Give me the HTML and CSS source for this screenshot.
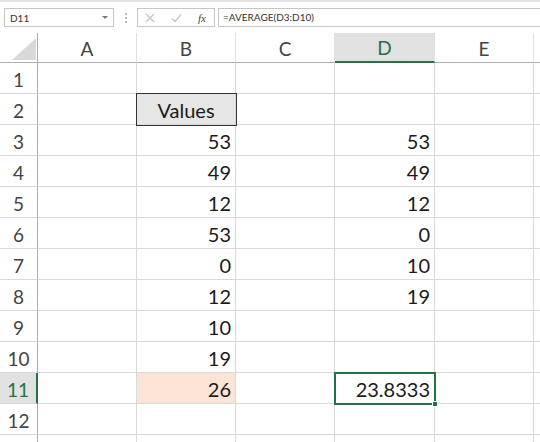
FILE: index.html
```html
<!doctype html>
<html lang="en">
<head>
	<meta charset="UTF-8">
	<title>Sheet</title>
	<link rel="stylesheet" href="styles.css">
</head>
<body>
	<div class="bar">
		<div class="namebox"><span>D11</span><i class="arrow"></i></div>
		<div class="dots"><b></b><b></b><b></b></div>
		<div class="fxbox">
			<svg width="10" height="10" viewBox="0 0 10 10"><path d="M1 1L9 9M9 1L1 9" stroke="#c4c4c4" stroke-width="1.2" fill="none"/></svg>
			<svg width="11" height="10" viewBox="0 0 11 10"><path d="M1 5.5L4 8.5L10 1.5" stroke="#c4c4c4" stroke-width="1.2" fill="none"/></svg>
			<span class="fx">fx</span>
		</div>
		<div class="formula">=AVERAGE(D3:D10)</div>
	</div>
	<div class="sheet">
		<div class="row head">
			<div class="rh corner"><svg width="38" height="30" viewBox="0 0 38 30"><polygon points="36,5 36,27 12,27" fill="#d9d9d9"/></svg></div>
			<div class="c">A</div><div class="c">B</div><div class="c">C</div><div class="c d sel">D</div><div class="c">E</div><div class="fill"></div>
		</div>
		<div class="row"><div class="rh">1</div><div class="c"></div><div class="c"></div><div class="c"></div><div class="c d"></div><div class="c"></div><div class="fill"></div></div>
		<div class="row"><div class="rh">2</div><div class="c"></div><div class="c label">Values</div><div class="c"></div><div class="c d"></div><div class="c"></div><div class="fill"></div></div>
		<div class="row"><div class="rh">3</div><div class="c"></div><div class="c">53</div><div class="c"></div><div class="c d">53</div><div class="c"></div><div class="fill"></div></div>
		<div class="row"><div class="rh">4</div><div class="c"></div><div class="c">49</div><div class="c"></div><div class="c d">49</div><div class="c"></div><div class="fill"></div></div>
		<div class="row"><div class="rh">5</div><div class="c"></div><div class="c">12</div><div class="c"></div><div class="c d">12</div><div class="c"></div><div class="fill"></div></div>
		<div class="row"><div class="rh">6</div><div class="c"></div><div class="c">53</div><div class="c"></div><div class="c d">0</div><div class="c"></div><div class="fill"></div></div>
		<div class="row"><div class="rh">7</div><div class="c"></div><div class="c">0</div><div class="c"></div><div class="c d">10</div><div class="c"></div><div class="fill"></div></div>
		<div class="row"><div class="rh">8</div><div class="c"></div><div class="c">12</div><div class="c"></div><div class="c d">19</div><div class="c"></div><div class="fill"></div></div>
		<div class="row"><div class="rh">9</div><div class="c"></div><div class="c">10</div><div class="c"></div><div class="c d"></div><div class="c"></div><div class="fill"></div></div>
		<div class="row"><div class="rh">10</div><div class="c"></div><div class="c">19</div><div class="c"></div><div class="c d"></div><div class="c"></div><div class="fill"></div></div>
		<div class="row"><div class="rh sel">11</div><div class="c"></div><div class="c peach">26</div><div class="c"></div><div class="c d active">23.8333</div><div class="c"></div><div class="fill"></div></div>
		<div class="row"><div class="rh">12</div><div class="c"></div><div class="c"></div><div class="c"></div><div class="c d"></div><div class="c"></div><div class="fill"></div></div>
		<div class="row"><div class="rh"></div><div class="c"></div><div class="c"></div><div class="c"></div><div class="c d"></div><div class="c"></div><div class="fill"></div></div>
	</div>
</body>
</html>
```

FILE: styles.css
```css
body,html{margin: 0;padding: 0;background: #fff;overflow: hidden;}
body{font-family: Lato, "Liberation Sans", sans-serif;color: #1a1a1a;}

/* formula bar */
.bar{height: 33px;box-sizing: border-box;border-top: 2px solid #e3e3e3;display: flex;align-items: flex-start;padding-top: 6px;}
.namebox{margin-left: 4px;width: 110px;height: 19px;box-sizing: border-box;border: 1px solid #c6c6c6;display: flex;align-items: center;justify-content: space-between;padding: 0 5px 0 5px;font-size: 10px;color: #333;}
.arrow{width: 0;height: 0;border-left: 3px solid transparent;border-right: 3px solid transparent;border-top: 3px solid #777;}
.dots{width: 23px;height: 19px;display: flex;flex-direction: column;align-items: center;justify-content: center;gap: 2px;}
.dots b{width: 2px;height: 2px;background: #bbb;display: block;}
.fxbox{width: 78px;height: 19px;box-sizing: border-box;border: 1px solid #c6c6c6;display: flex;align-items: center;justify-content: space-between;padding: 0 8px 0 7px;}
.fx{font-family: "Liberation Serif", serif;font-style: italic;font-size: 11px;color: #444;}
.formula{flex: 1;margin-left: 3px;height: 19px;box-sizing: border-box;border: 1px solid #c6c6c6;border-right: none;font-size: 10px;color: #333;line-height: 17px;padding-left: 4px;}

/* grid */
.row{display: flex;height: 31px;}
.row.head{height: 30px;}
.row > div{box-sizing: border-box;flex: none;border-right: 1px solid #d9d9d9;border-bottom: 1px solid #d9d9d9;font-size: 20px;text-align: right;padding: 2px 4px 0 0;line-height: 29px;}
.c{width: 99px;}
.c.d{width: 100px;}
.row > .fill{flex: 1;border-right: none;}
.rh{width: 38px;text-align: center !important;padding: 2px 0 0 0 !important;color: #444;font-size: 19px !important;border-right-color: #ababab !important;}
.head > div{text-align: center;padding: 0;line-height: 31px;color: #444;font-size: 19px;border-bottom-color: #ababab;border-right-color: #e1e1e1;}
.head .corner{padding: 0 !important;line-height: 0;}
.head .fill{border-bottom-color: #ababab;}
.head .sel{background: #e1e1e1;border-bottom: 2px solid #217346;color: #217346;line-height: 30px;}
.rh.sel{background: #e1e1e1;border-right: 2px solid #217346 !important;color: #217346;}

.label{text-align: center !important;padding-right: 0 !important;background: #e7e6e6;outline: 1px solid #333;position: relative;z-index: 1;}
.peach{background: #fce4d6;}
.active{position: relative;outline: 2px solid #217346;outline-offset: -1px;z-index: 2;}
.active::after{content: "";position: absolute;right: -4px;bottom: -4px;width: 4px;height: 4px;background: #217346;border: 1px solid #fff;}
```
